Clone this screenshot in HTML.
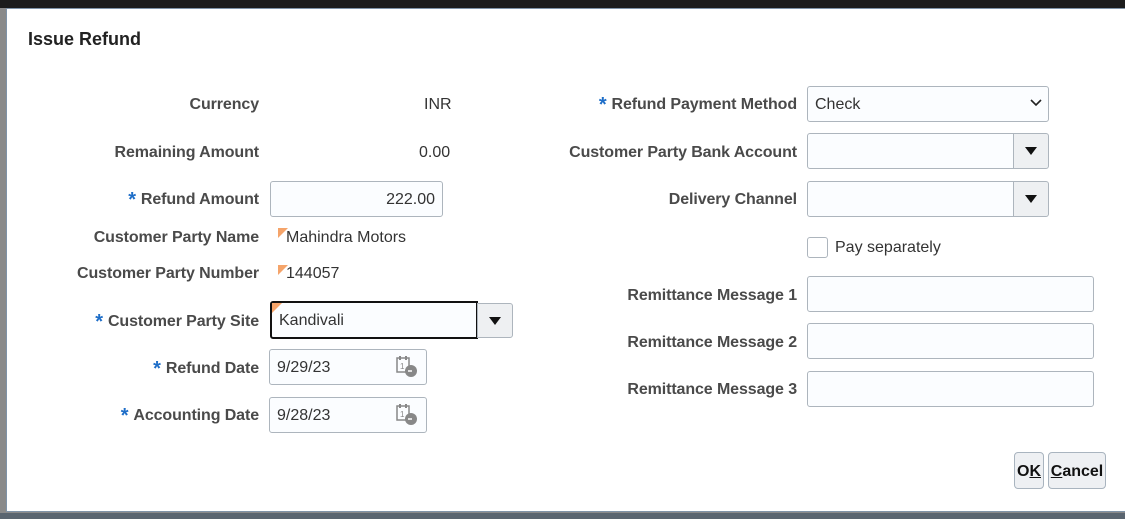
<!DOCTYPE html>
<html><head><style>
body{margin:0;width:1125px;height:519px;overflow:hidden;background:#8a8a8a;font-family:"Liberation Sans",sans-serif;position:relative}
.top{position:absolute;left:0;top:0;width:1125px;height:8px;background:#1c1c1c}
.bot{position:absolute;left:0;top:513px;width:1125px;height:6px;background:#5a6570}
.dlg{position:absolute;left:6px;top:8px;width:1125px;height:504px;background:#fff;border:1px solid #7f93a8;box-sizing:border-box}
.t{position:absolute;font-size:16px;color:#333;white-space:nowrap}
.lbl{position:absolute;font-size:16px;font-weight:bold;color:#4a4a4a;text-align:right;white-space:nowrap;letter-spacing:-0.1px}
.req{color:#1e6ec8;font-size:20px;position:relative;top:2px;margin-right:5px;line-height:0}
.in{position:absolute;background:#fbfdff;border:1px solid #adb5bd;border-radius:3px;box-sizing:border-box;font-size:16px;color:#333;padding-left:7px;padding-top:2px;display:flex;align-items:center}
.btn{position:absolute;background:#eef0f2;border:1px solid #adb5bd;border-radius:0 3px 3px 0;box-sizing:border-box;display:flex;align-items:center;justify-content:center}
.tri{width:0;height:0;border-left:6px solid transparent;border-right:6px solid transparent;border-top:8px solid #111}
.flag{position:absolute;width:0;height:0;border-top:10px solid #f5a46a;border-right:10px solid transparent}
.pb{position:absolute;background:#eef0f3;border:1px solid #a9b4bf;border-radius:4px;box-sizing:border-box;font-weight:bold;font-size:16px;color:#111;display:flex;align-items:center;justify-content:center;padding-top:2px}
</style></head><body>
<div class="top"></div><div class="bot"></div>
<div class="dlg"></div>
<div class="t" style="left:28px;top:29px;font-size:18px;font-weight:bold;color:#222">Issue Refund</div>

<div class="lbl" style="right:866px;top:96px">Currency</div>
<div class="t" style="left:424px;top:96px">INR</div>
<div class="lbl" style="right:866px;top:144px">Remaining Amount</div>
<div class="t" style="left:419px;top:144px">0.00</div>
<div class="lbl" style="right:866px;top:191px"><span class="req">*</span>Refund Amount</div>
<div class="in" style="left:270px;top:181px;width:173px;height:36px;justify-content:flex-end;padding-right:7px">222.00</div>
<div class="lbl" style="right:866px;top:229px">Customer Party Name</div>
<div class="flag" style="left:278px;top:228px"></div>
<div class="t" style="left:286px;top:229px">Mahindra Motors</div>
<div class="lbl" style="right:866px;top:265px">Customer Party Number</div>
<div class="flag" style="left:278px;top:265px"></div>
<div class="t" style="left:286px;top:265px">144057</div>
<div class="lbl" style="right:866px;top:313px"><span class="req">*</span>Customer Party Site</div>
<div class="in" style="left:270px;top:301px;width:208px;height:38px;border:2px solid #111;border-radius:3px 0 0 3px">Kandivali</div>
<div class="flag" style="left:272px;top:303px"></div>
<div class="btn" style="left:477px;top:303px;width:36px;height:35px"><div class="tri"></div></div>
<div class="lbl" style="right:866px;top:360px"><span class="req">*</span>Refund Date</div>
<div class="in" style="left:269px;top:349px;width:158px;height:36px">9/29/23</div>
<div class="lbl" style="right:866px;top:407px"><span class="req">*</span>Accounting Date</div>
<div class="in" style="left:269px;top:397px;width:158px;height:36px">9/28/23</div>
<svg style="position:absolute;left:396px;top:355px" width="24" height="24" viewBox="0 0 24 24"><rect x="1" y="3" width="12" height="14" fill="none" stroke="#888" stroke-width="1.5"/><rect x="3" y="1" width="2" height="4" fill="#888"/><rect x="9" y="1" width="2" height="4" fill="#888"/><text x="4" y="14" font-size="8" fill="#888" font-family="Liberation Sans">1</text><circle cx="15" cy="16" r="6" fill="#888"/><path d="M12 16h4" stroke="#fff" stroke-width="1.5"/></svg>
<svg style="position:absolute;left:396px;top:403px" width="24" height="24" viewBox="0 0 24 24"><rect x="1" y="3" width="12" height="14" fill="none" stroke="#888" stroke-width="1.5"/><rect x="3" y="1" width="2" height="4" fill="#888"/><rect x="9" y="1" width="2" height="4" fill="#888"/><text x="4" y="14" font-size="8" fill="#888" font-family="Liberation Sans">1</text><circle cx="15" cy="16" r="6" fill="#888"/><path d="M12 16h4" stroke="#fff" stroke-width="1.5"/></svg>

<div class="lbl" style="right:328px;top:96px"><span class="req">*</span>Refund Payment Method</div>
<div class="in" style="left:807px;top:86px;width:242px;height:36px">Check</div>
<svg style="position:absolute;left:1029px;top:98px" width="14" height="10"><path d="M2 2l5 5 5-5" fill="none" stroke="#222" stroke-width="1.6"/></svg>
<div class="lbl" style="right:328px;top:144px">Customer Party Bank Account</div>
<div class="in" style="left:807px;top:133px;width:207px;height:36px;border-radius:3px 0 0 3px"></div>
<div class="btn" style="left:1013px;top:133px;width:36px;height:36px"><div class="tri"></div></div>
<div class="lbl" style="right:328px;top:191px">Delivery Channel</div>
<div class="in" style="left:807px;top:181px;width:207px;height:36px;border-radius:3px 0 0 3px"></div>
<div class="btn" style="left:1013px;top:181px;width:36px;height:36px"><div class="tri"></div></div>
<div class="in" style="left:807px;top:237px;width:21px;height:21px;background:#fff"></div>
<div class="t" style="left:835px;top:239px">Pay separately</div>
<div class="lbl" style="right:328px;top:287px">Remittance Message 1</div>
<div class="in" style="left:807px;top:276px;width:287px;height:36px"></div>
<div class="lbl" style="right:328px;top:334px">Remittance Message 2</div>
<div class="in" style="left:807px;top:323px;width:287px;height:36px"></div>
<div class="lbl" style="right:328px;top:381px">Remittance Message 3</div>
<div class="in" style="left:807px;top:371px;width:287px;height:36px"></div>

<div class="pb" style="left:1014px;top:452px;width:30px;height:37px">O<u>K</u></div>
<div class="pb" style="left:1048px;top:452px;width:58px;height:37px"><u>C</u>ancel</div>
</body></html>
